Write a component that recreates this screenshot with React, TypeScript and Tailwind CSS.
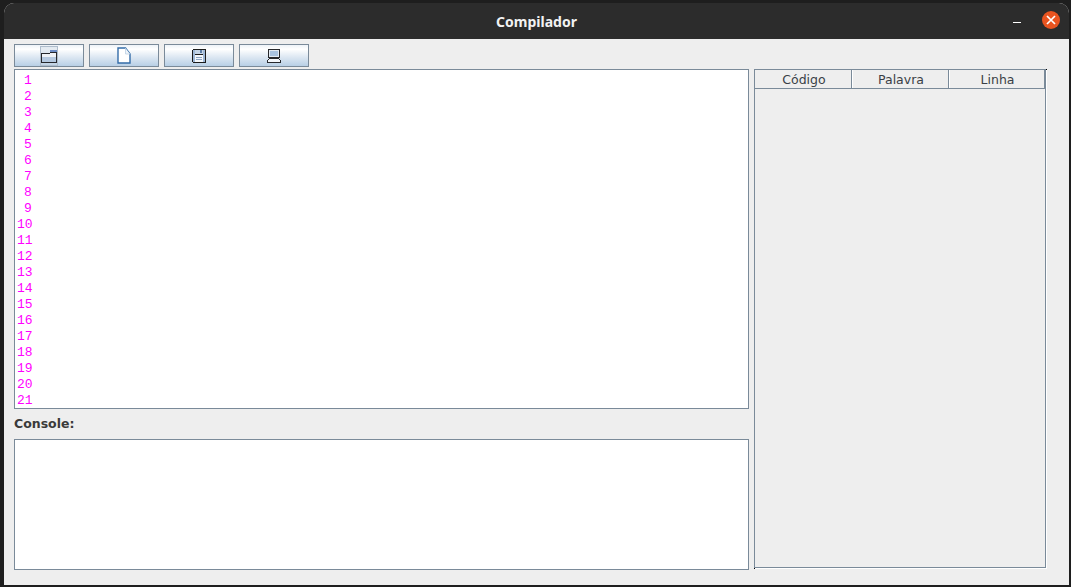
const lines = Array.from({ length: 21 }, (_, i) => i + 1);

function ToolButton({ children }: { children: React.ReactNode }) {
  return (
    <button className="w-[70px] h-[23px] flex items-center justify-center border border-[#7a8a99] bg-[linear-gradient(to_bottom,#eef3f8_0%,#ffffff_20%,#dfe9f3_55%,#b8cfe5_100%)]">
      {children}
    </button>
  );
}

const OpenIcon = () => (
  <svg width="18" height="20" viewBox="0 0 18 20" shapeRendering="crispEdges">
    <rect x="0.5" y="0.5" width="17" height="19" fill="#c8d4e2" fillOpacity="0.45" stroke="#aebccb" />
    <path d="M1.5 7.5H9.5L10.5 6.5H16.5V16.5H1.5Z" fill="#eef2f7" stroke="#26282c" />
    <rect x="2" y="11" width="14" height="5" fill="#b5c9e0" />
    <rect x="10" y="4" width="7" height="2" fill="#6a8bc5" />
  </svg>
);
const NewIcon = () => (
  <svg width="14" height="17" viewBox="0 0 14 17">
    <path d="M1 1H8.5L13 7V16H1Z" fill="#ffffff" stroke="#336ca8" strokeWidth="1.4" />
    <path d="M8.5 1V7H13" fill="#eef3f8" stroke="#bcd0e4" strokeWidth="0.8" />
  </svg>
);
const SaveIcon = () => (
  <svg width="14" height="14" viewBox="0 0 14 14" shapeRendering="crispEdges">
    <path d="M1.5 0.5H13.5V13.5H1.5L0.5 12.5V1.5Z" fill="#9fb8d6" stroke="#1c1c1c" />
    <rect x="3" y="1" width="8" height="4" fill="#c4d4e6" />
    <rect x="8" y="1" width="2" height="3" fill="#5e7fa8" />
    <rect x="3" y="5" width="8" height="1" fill="#1c1c1c" />
    <rect x="3" y="6" width="8" height="7" fill="#f4f7fb" />
    <rect x="4" y="8" width="6" height="1" fill="#8da6c4" />
    <rect x="4" y="10" width="6" height="1" fill="#8da6c4" />
  </svg>
);
const PcIcon = () => (
  <svg width="14" height="14" viewBox="0 0 14 14" shapeRendering="crispEdges">
    <rect x="1.5" y="0.5" width="11" height="8" fill="#e3eaf2" stroke="#26282c" />
    <rect x="3" y="2" width="8" height="5" fill="#a9c3e0" />
    <path d="M2.5 9.5H11.5L13.5 11.5V13.5H0.5V11.5Z" fill="#f4f7fb" stroke="#26282c" />
  </svg>
);

export default function App() {
  return (
    <div className="w-[1071px] h-[587px] overflow-hidden bg-[#1e1e1e] pt-[3px] pb-[2px] pl-[4px] pr-[2px] font-['DejaVu_Sans',sans-serif]">
      <div className="h-full flex flex-col rounded-t-[10px] overflow-hidden bg-[#eeeeee]">
        <header className="relative h-[36px] shrink-0 bg-[#2c2c2c] flex items-center justify-center">
          <span className="text-[14px] font-bold text-[#f2f2f2] font-['Noto_Sans','Liberation_Sans',sans-serif]">Compilador</span>
          <span className="absolute left-[1009px] top-[19px] w-[8px] h-px bg-white" />
          <span className="absolute right-[9px] top-[8px] w-[18px] h-[18px] rounded-full bg-[#e95420] flex items-center justify-center">
            <svg width="10" height="10" viewBox="0 0 10 10">
              <path d="M1 1L9 9M9 1L1 9" stroke="#fff" strokeWidth="1.7" />
            </svg>
          </span>
        </header>

        <main className="flex-1 flex pl-[10px] pt-[5px] pb-[15px] gap-[5px] bg-[#eeeeee]">
          <div className="w-[735px] flex flex-col">
            <div className="flex gap-[5px] h-[23px]">
              <ToolButton><OpenIcon /></ToolButton>
              <ToolButton><NewIcon /></ToolButton>
              <ToolButton><SaveIcon /></ToolButton>
              <ToolButton><PcIcon /></ToolButton>
            </div>
            <div className="mt-[2px] h-[340px] border border-[#7a8a99] bg-white pt-[3px] pl-[2px] font-['Liberation_Mono',monospace] text-[13px] leading-[16px] text-[#ff00ff] overflow-hidden">
              {lines.map((n) => (
                <div key={n} className={n < 10 ? "pl-[7px]" : ""}>{n}</div>
              ))}
            </div>
            <div className="h-[30px] flex items-center text-[12.5px] leading-none font-bold text-[#3a3a3a]">Console:</div>
            <div className="h-[131px] border border-[#7a8a99] bg-white" />
          </div>

          <div className="relative w-[292px] mt-[25px] h-[499px] border border-[#7a8a99] bg-[#eeeeee] shadow-[1px_1px_0_#ffffff]">
            <div className="flex h-[19px] border-b border-[#7a8a99] text-[12.5px] leading-[20px] text-[#3a3f46] text-center">
              <div className="w-[97px] pl-[2px] border-r border-[#7a8a99]">Código</div>
              <div className="w-[97px] pl-[2px] border-r border-[#7a8a99] shadow-[inset_1px_0_0_#ffffff]">Palavra</div>
              <div className="w-[96px] pl-[2px] border-r border-[#7a8a99] shadow-[inset_1px_0_0_#ffffff]">Linha</div>
            </div>
            <span className="absolute -top-px -right-[2px] w-px h-px bg-black" />
            <span className="absolute -bottom-[2px] -left-px w-px h-px bg-black" />
          </div>
        </main>
      </div>
    </div>
  );
}
